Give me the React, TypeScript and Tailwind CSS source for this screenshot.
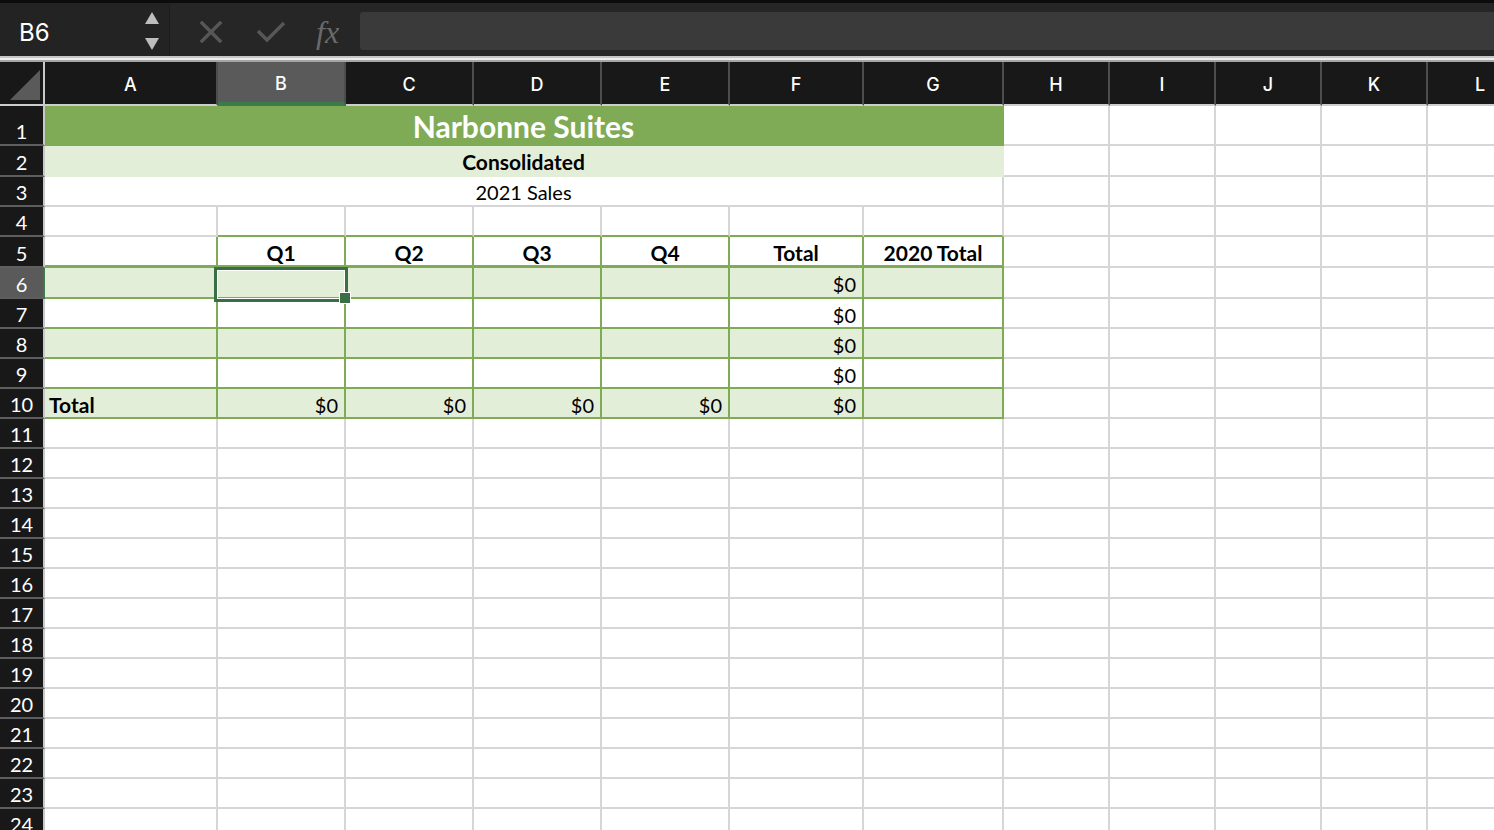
import clsx from 'clsx'

const letters = ['A', 'B', 'C', 'D', 'E', 'F', 'G', 'H', 'I', 'J', 'K', 'L']

const colWidths = [
  'w-[173px]',
  'w-[128px]',
  'w-[128px]',
  'w-[128px]',
  'w-[128px]',
  'w-[134px]',
  'w-[140px]',
  'w-[106px]',
  'w-[106px]',
  'w-[106px]',
  'w-[106px]',
  'w-[106px]',
]

const rowHeights: Record<number, string> = {
  1: 'h-[40px]',
  2: 'h-[31px]',
  5: 'h-[31px]',
  6: 'h-[31px]',
}

const rows = Array.from({ length: 24 }, (_, i) => i + 1)

const quarterHeaders: Record<number, string> = {
  1: 'Q1',
  2: 'Q2',
  3: 'Q3',
  4: 'Q4',
  5: 'Total',
  6: '2020 Total',
}

function cellText(row: number, col: number) {
  if (row === 5 && quarterHeaders[col]) {
    return { text: quarterHeaders[col], align: 'justify-center', bold: true }
  }
  if (row >= 6 && row <= 10 && col === 5) {
    return { text: '$0', align: 'justify-end pr-[6px]', bold: false }
  }
  if (row === 10 && col === 0) {
    return { text: 'Total', align: 'justify-start pl-[4px]', bold: true }
  }
  if (row === 10 && col >= 1 && col <= 4) {
    return { text: '$0', align: 'justify-end pr-[6px]', bold: false }
  }
  return null
}

function RowHeader({ row }: { row: number }) {
  const active = row === 6
  return (
    <div
      className={clsx(
        'flex w-[45px] shrink-0 items-end justify-center border-r-2 border-b-2 pb-[3px] text-[20px] leading-none text-white',
        active
          ? 'border-r-[#3d7a4b] border-b-[#5e5e5e] bg-[#5a5a5a]'
          : 'border-r-[#c9c9c9] border-b-[#5e5e5e] bg-[#181818]',
      )}
    >
      {row}
    </div>
  )
}

function GridCell({ row, col }: { row: number; col: number }) {
  const inTable = row >= 5 && row <= 10 && col <= 6
  const tableTop = row === 4 && col >= 1 && col <= 6
  const banded = inTable && (row === 6 || row === 8 || row === 10)
  const content = cellText(row, col)
  const selected = row === 6 && col === 1

  return (
    <div
      className={clsx(
        'flex shrink-0 items-center pt-[3px] text-black',
        colWidths[col],
        row === 5 && col <= 6 ? 'border-b-[3px]' : 'border-b-2',
        'border-r-2',
        inTable ? 'border-r-[#7fab56]' : 'border-r-[#d6d6d6]',
        inTable || tableTop ? 'border-b-[#7fab56]' : 'border-b-[#d6d6d6]',
        banded ? 'bg-[#e3eed9]' : 'bg-white',
        content?.align,
        content?.bold ? 'text-[21px] font-bold' : 'text-[20px]',
        selected && 'relative',
      )}
    >
      {content?.text}
      {selected && (
        <>
          <div className="absolute -top-[1px] -left-[4px] z-10 h-[35px] w-[134px] border-[3px] border-[#3a6f46] shadow-[inset_0_0_0_1px_white]" />
          <div className="absolute top-[24px] left-[121px] z-20 h-[12px] w-[12px] border border-white bg-[#3a6f46]" />
        </>
      )}
    </div>
  )
}

function MergedRow({ row }: { row: number }) {
  return (
    <>
      {row === 1 && (
        <div className="flex w-[959px] shrink-0 items-center justify-center border-r-2 border-b-2 border-[#7fab56] bg-[#7fab56] pt-[3px] text-[30px] font-bold text-white">
          Narbonne Suites
        </div>
      )}
      {row === 2 && (
        <div className="flex w-[959px] shrink-0 items-center justify-center border-r-2 border-b-2 border-[#e3eed9] bg-[#e3eed9] pt-[2px] text-[21px] font-bold text-black">
          Consolidated
        </div>
      )}
      {row === 3 && (
        <div className="flex w-[959px] shrink-0 items-center justify-center border-r-2 border-b-2 border-[#d6d6d6] bg-white pt-[2px] text-[20px] text-black">
          2021 Sales
        </div>
      )}
      {colWidths.slice(7).map((w, i) => (
        <div
          key={i}
          className={clsx(
            'shrink-0 border-r-2 border-b-2 border-[#d6d6d6] bg-white',
            w,
          )}
        />
      ))}
    </>
  )
}

function FormulaBar() {
  return (
    <div className="flex h-[56px] flex-col bg-[#262626]">
      <div className="h-[3px] bg-[#0c0c0c]" />
      <div className="flex flex-1">
        <div className="flex w-[170px] items-center justify-between border-r border-[#1d1d1d] bg-[#232323] pr-[9px] pl-[19px]">
          <span className="pt-[6px] font-['Inter',sans-serif] text-[24px] leading-none text-white">
            B6
          </span>
          <svg width="16" height="42" viewBox="0 0 16 42" className="mt-[4px]">
            <path d="M8 1 L15 13 L1 13 Z" fill="#bdbdbd" />
            <path d="M1 27 L15 27 L8 39 Z" fill="#bdbdbd" />
          </svg>
        </div>
        <div className="flex w-[190px] items-center gap-[33px] pt-[5px] pl-[29px]">
          <svg width="24" height="22" viewBox="0 0 24 22">
            <path
              d="M3 2 L21 20 M21 2 L3 20"
              stroke="#575757"
              strokeWidth="3.4"
              strokeLinecap="square"
            />
          </svg>
          <svg width="30" height="22" viewBox="0 0 30 22">
            <path
              d="M2 10 L11 19 L28 2"
              stroke="#575757"
              strokeWidth="3.4"
              fill="none"
            />
          </svg>
          <span className="-ml-[3px] font-['Liberation_Serif',serif] text-[32px] leading-none text-[#6a6a6a] italic">
            fx
          </span>
        </div>
        <div className="mt-[9px] h-[38px] flex-1 rounded-l-[3px] bg-[#3a3a3a]" />
      </div>
    </div>
  )
}

export default function App() {
  return (
    <div className="h-screen w-full overflow-hidden bg-white font-['Lato',sans-serif]">
      <FormulaBar />
      <div className="h-[2px] bg-[#c6c6c6]" />
      <div className="h-[2px] bg-[#ededed]" />
      <div className="h-[2px] bg-[#a5a5a5]" />

      <div className="flex h-[44px]">
        <div className="flex w-[45px] shrink-0 items-end justify-end border-r-2 border-b-2 border-r-[#c9c9c9] border-b-[#cdcdcd] bg-[#181818] pr-[3px] pb-[4px]">
          <svg width="30" height="30" viewBox="0 0 30 30">
            <path d="M30 0 L30 30 L0 30 Z" fill="#5a5a5a" />
          </svg>
        </div>
        {letters.map((letter, i) => (
          <div
            key={letter}
            className={clsx(
              'flex shrink-0 items-center justify-center border-r-2 border-r-[#4d4d4d] pt-[2px] font-[\'Inter\',sans-serif] text-[18px] font-medium text-white',
              colWidths[i],
              letter === 'B'
                ? 'border-b-4 border-b-[#3d7a4b] bg-[#5a5a5a]'
                : 'border-b-2 border-b-[#cdcdcd] bg-[#181818]',
            )}
          >
            {letter}
          </div>
        ))}
      </div>

      {rows.map((row) => (
        <div key={row} className={clsx('flex', rowHeights[row] ?? 'h-[30px]')}>
          <RowHeader row={row} />
          {row <= 3 ? (
            <MergedRow row={row} />
          ) : (
            letters.map((letter, col) => (
              <GridCell key={letter} row={row} col={col} />
            ))
          )}
        </div>
      ))}
    </div>
  )
}
